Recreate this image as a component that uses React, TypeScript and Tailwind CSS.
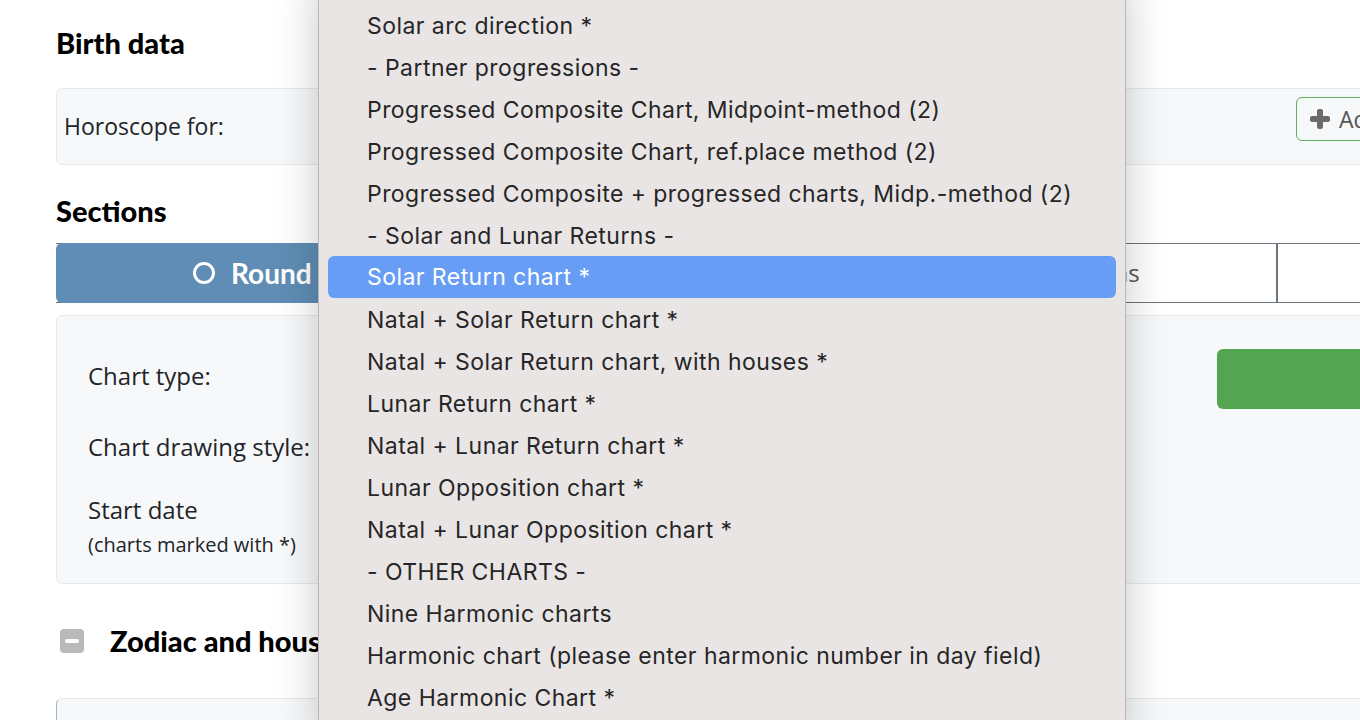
import React from "react";

const options = [
  "Solar arc direction *",
  "- Partner progressions -",
  "Progressed Composite Chart, Midpoint-method (2)",
  "Progressed Composite Chart, ref.place method (2)",
  "Progressed Composite + progressed charts, Midp.-method (2)",
  "- Solar and Lunar Returns -",
  "Solar Return chart *",
  "Natal + Solar Return chart *",
  "Natal + Solar Return chart, with houses *",
  "Lunar Return chart *",
  "Natal + Lunar Return chart *",
  "Lunar Opposition chart *",
  "Natal + Lunar Opposition chart *",
  "- OTHER CHARTS -",
  "Nine Harmonic charts",
  "Harmonic chart (please enter harmonic number in day field)",
  "Age Harmonic Chart *",
  "Age Harmonic Chart, with houses *",
];

const selected = 6;

const heading = "font-['Lato',sans-serif] font-black text-[29px] text-black leading-none";

const App = () => {
  return (
    <div className="relative w-[1360px] h-[720px] overflow-hidden bg-white font-['Open_Sans',sans-serif] text-[#212529]">
      <div className="w-[1600px] pl-[56px]">
        <h2 className={`${heading} pt-[28px] h-[88px]`}>Birth data</h2>

        <div className="h-[77px] flex items-center pl-[7px] bg-[#f7f8f9] border border-[#e6e8ea] rounded-md">
          <span className="w-[1232px] text-[23px]">Horoscope for:</span>
          <div className="self-start mt-[8px] flex items-center gap-2 h-[44px] w-[300px] px-3 border border-[#5fae5c] rounded-md text-[23px] text-[#555]">
            <svg width="22" height="22" viewBox="0 0 22 22">
              <rect x="8" y="1" width="6" height="20" rx="2" fill="#6b6b6b" />
              <rect x="1" y="8" width="20" height="6" rx="2" fill="#6b6b6b" />
            </svg>
            <span>Add a new person</span>
          </div>
        </div>

        <h2 className={`${heading} pt-[31px] h-[78px]`}>Sections</h2>

        <div className="flex h-[60px] border-y border-[#6c757d] w-[1600px]">
          <div className="w-[610px] -my-px bg-[#5f8db5] rounded-md flex items-center pl-[137px] gap-[16px] text-white font-['Lato',sans-serif] font-bold text-[28px]">
            <span className="w-[22px] h-[22px] rounded-full border-[3px] border-white" />
            <span>Round chart</span>
          </div>
          <div className="w-[612px] flex items-center justify-center border-r-2 border-[#6c757d] text-[24px] text-[#555] pl-[50px]">
            Returns and Progressions
          </div>
          <div className="flex-1" />
        </div>

        <div className="mt-[12px] h-[269px] bg-[#f7f8f9] border border-[#e6e8ea] rounded-md px-[31px] pt-[33px]">
          <div className="flex">
            <div className="flex flex-col w-[1129px] text-[24px]">
              <div className="h-[54px] flex items-center">Chart type:</div>
              <div className="h-[72px] flex items-end pb-[10px]">Chart drawing style:</div>
              <div className="h-[53px] flex items-end">Start date</div>
              <div className="text-[20px] mt-[2px]">(charts marked with *)</div>
            </div>
            <div className="w-[350px] h-[60px] bg-[#54a552] rounded-md" />
          </div>
        </div>

        <div className="flex items-center h-[114px] pl-[4px]">
          <div className="w-[24px] h-[24px] rounded-[4px] bg-[#bababa] flex items-center justify-center">
            <div className="w-[14px] h-[4px] bg-white rounded-sm" />
          </div>
          <h2 className={`${heading} ml-[26px] -mt-[2px]`}>Zodiac and houses</h2>
        </div>

        <div className="h-[60px] bg-[#f7f8f9] border border-[#e6e8ea] border-l-[#9fb5cc] rounded-md" />
      </div>

      <div className="absolute left-[318px] top-[-20px] w-[808px] h-[760px] bg-[#e9e5e5] border-x border-[#b8b6b6] shadow-[0_0_40px_rgba(0,0,0,0.22)] pt-[24px] font-['Inter',sans-serif] text-[23px] tracking-[0.45px] text-[#262626]">
        {options.map((opt, i) => (
          <div
            key={opt}
            className={
              i === selected
                ? "h-[42px] mx-[9px] pl-[39px] flex items-center rounded-md bg-[#689df6] text-white"
                : "h-[42px] mx-[9px] pl-[39px] pt-[2px] flex items-center"
            }
          >
            {opt}
          </div>
        ))}
      </div>
    </div>
  );
};

export default App;
